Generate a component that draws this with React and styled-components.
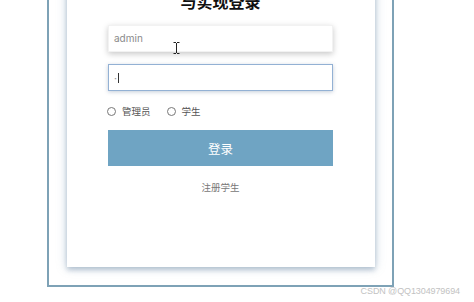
import React from "react";
import styled, { createGlobalStyle } from "styled-components";

const Global = createGlobalStyle`
  html, body { margin: 0; padding: 0; background: #fff; overflow: hidden; }
  body { font-family: "Noto Sans CJK SC", "Noto Sans", sans-serif; }
`;

const Page = styled.div`
  position: relative;
  width: 474px;
  height: 302px;
  overflow: hidden;
`;

const Frame = styled.div`
  margin: -40px 0 0 47px;
  width: 347px;
  box-sizing: border-box;
  border: 2px solid #7ea2b6;
  padding: 18px 17px 18px 18px;
`;

const Card = styled.div`
  background: #fff;
  height: 287px;
  box-sizing: border-box;
  padding: 11px 0 0 41px;
  box-shadow: 0 0 10px rgba(110, 150, 180, 0.35), 0 3px 5px rgba(80, 110, 140, 0.35);
  display: flex;
  flex-direction: column;
`;

const Title = styled.h1`
  margin: 0;
  width: 225px;
  text-align: center;
  font-size: 16px;
  line-height: 20px;
  font-weight: 700;
  color: #111;
`;

const Field = styled.div`
  width: 225px;
  height: 27px;
  box-sizing: border-box;
  margin-top: ${(p) => p.$gap}px;
  border: 1px solid ${(p) => (p.$focus ? "#93b1d4" : "#f2f2f2")};
  box-shadow: ${(p) =>
    p.$focus ? "0 1px 4px rgba(60,90,130,0.3)" : "0 2px 6px rgba(0,0,0,0.22)"};
  display: flex;
  align-items: center;
  padding-left: 5px;
  padding-bottom: ${(p) => (p.$focus ? 0 : 2)}px;
  font-family: "Inter", "Noto Sans", sans-serif;
  font-size: 10px;
  color: #8a8a8a;
`;

const Caret = styled.span`
  display: inline-block;
  width: 1px;
  height: 10px;
  background: #333;
  margin-left: 1px;
`;

const RadioRow = styled.div`
  display: flex;
  align-items: center;
  margin-top: 15px;
  height: 10px;
`;

const RadioItem = styled.label`
  display: flex;
  align-items: center;
  margin-right: 17px;
  font-size: 9.5px;
  color: #555;
`;

const Circle = styled.span`
  width: 9px;
  height: 9px;
  box-sizing: border-box;
  border: 1px solid #777;
  border-radius: 50%;
  margin: 0 6px 0 -1px;
`;

const Button = styled.button`
  margin-top: 14px;
  width: 225px;
  height: 36px;
  border: 0;
  background: #6fa4c3;
  color: #fff;
  font-family: "Noto Sans CJK SC", sans-serif;
  font-size: 12.5px;
  padding: 0;
`;

const Link = styled.div`
  width: 225px;
  margin-top: 14px;
  text-align: center;
  font-size: 9.5px;
  color: #777;
`;

const Watermark = styled.div`
  position: absolute;
  right: 14px;
  top: 286px;
  font-family: "Liberation Sans", sans-serif;
  font-size: 9px;
  color: #c2c2c2;
  letter-spacing: -0.1px;
`;

const Cursor = styled.svg`
  position: absolute;
  left: 173px;
  top: 42px;
`;

export default function App() {
  return (
    <Page>
      <Global />
      <Frame>
        <Card>
          <Title>与实现登录</Title>
          <Field $gap={14}>admin</Field>
          <Field $gap={12} $focus>
            ·<Caret />
          </Field>
          <RadioRow>
            <RadioItem>
              <Circle />
              管理员
            </RadioItem>
            <RadioItem>
              <Circle />
              学生
            </RadioItem>
          </RadioRow>
          <Button>登录</Button>
          <Link>注册学生</Link>
        </Card>
      </Frame>
      <Cursor width="7" height="12" viewBox="0 0 7 12">
        <path d="M0.5 0.5h2.5M4 0.5h2.5M3.5 1v10M0.5 11.5h2.5M4 11.5h2.5" stroke="#222" strokeWidth="1" fill="none" />
      </Cursor>
      <Watermark>CSDN @QQ1304979694</Watermark>
    </Page>
  );
}
